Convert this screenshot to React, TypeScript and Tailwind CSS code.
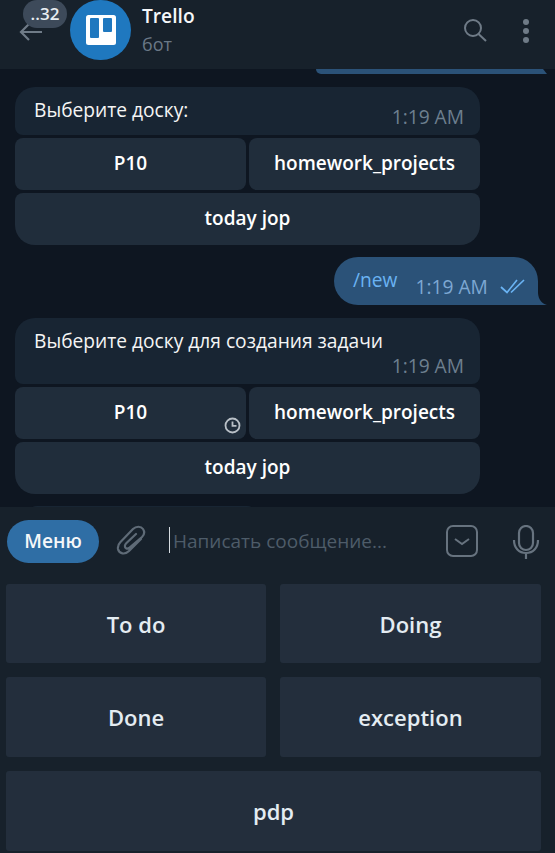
import React from 'react';

const font = { fontFamily: '"Open Sans", "Noto Sans", sans-serif' };

const Tail = ({ className }: { className: string }) => (
  <svg className={className} width="9" height="12" viewBox="0 0 9 12">
    <path d="M0 0 C0.5 6 3 10 9 12 L0 12 Z" fill="#2b5278" />
  </svg>
);

const InlineBtn = ({ label, className, children }: { label: string; className: string; children?: React.ReactNode }) => (
  <div className={`relative flex h-[52px] items-center justify-center bg-[#202d3b] pb-[1px] text-[19px] font-semibold text-white ${className}`}>
    {label}
    {children}
  </div>
);

const Board = ({ text, tall, pending }: { text: string; tall?: boolean; pending?: boolean }) => (
  <div className="ml-[15px] flex w-[465px] flex-col gap-[3px]">
    <div className={`relative rounded-t-[20px] rounded-b-[8px] bg-[#182533] pl-[19px] pt-[10px] text-[19.2px] leading-[26px] text-[#f5f5f5] ${tall ? 'h-[66px]' : 'h-[48px]'}`}>
      {text}
      <span className="absolute bottom-[6px] right-[16px] text-[19.2px] leading-[24px] text-[#6d7f8f]">1:19 AM</span>
    </div>
    <div className="flex gap-[3px]">
      <InlineBtn label="P10" className="w-[231px] rounded-[8px]">
        {pending && (
          <svg className="absolute bottom-[5px] right-[5px]" width="17" height="17" viewBox="0 0 17 17" fill="none" stroke="#b9c0c7" strokeWidth="1.8">
            <circle cx="8.5" cy="8.5" r="7" />
            <path d="M8.5 4.5 V8.8 H12.5" />
          </svg>
        )}
      </InlineBtn>
      <InlineBtn label="homework_projects" className="w-[231px] rounded-[8px]" />
    </div>
    <InlineBtn label="today jop" className="rounded-t-[8px] rounded-b-[20px]" />
  </div>
);

const KeyBtn = ({ label, className }: { label: string; className: string }) => (
  <div className={`flex items-center justify-center rounded-[3px] bg-[#232e3c] pt-[1px] text-[22px] font-semibold text-[#e4ecf2] ${className}`}>
    {label}
  </div>
);

export default function App() {
  return (
    <div className="flex h-[853px] w-[555px] flex-col overflow-hidden bg-[#0e1621]" style={font}>
      {/* header */}
      <div className="relative flex h-[69px] shrink-0 items-start bg-[#17212b]">
        <svg className="absolute left-[18px] top-[19px]" width="26" height="26" viewBox="0 0 26 26" fill="none" stroke="#6f7b87" strokeWidth="2.2">
          <path d="M24 13 H3 M11 5 L3 13 L11 21" />
        </svg>
        <div className="absolute left-[23px] top-0 flex h-[28px] w-[44px] items-center justify-center rounded-[14px] bg-[#3d4a5a] text-[17px] font-semibold text-[#e8edf1]">
          ..32
        </div>
        <div className="absolute left-[70px] top-0 flex h-[60px] w-[61px] items-center justify-center rounded-full bg-[#1f78bf]">
          <svg width="32" height="32" viewBox="0 0 32 32">
            <rect x="1" y="1" width="30" height="30" rx="2.5" fill="#fff" />
            <rect x="5" y="4" width="9" height="20" rx="1" fill="#1f78bf" />
            <rect x="18" y="4" width="9" height="14" rx="1" fill="#1f78bf" />
          </svg>
        </div>
        <div className="ml-[142px] flex flex-col">
          <span className="mt-[2px] text-[19.2px] font-semibold leading-[28px] text-[#f5f7f9]">Trello</span>
          <span className="mt-[1px] text-[18px] leading-[26px] text-[#6a7886]">бот</span>
        </div>
        <div className="ml-auto mr-[26px] mt-[18px] flex items-start gap-[36px]">
          <svg width="24" height="25" viewBox="0 0 24 25" fill="none" stroke="#6f7b87" strokeWidth="2">
            <circle cx="10" cy="10" r="8" />
            <path d="M15.5 16 L23 23" />
          </svg>
          <div className="mt-[1px] flex flex-col gap-[3px]">
            <span className="h-[6px] w-[6px] rounded-full bg-[#6f7b87]" />
            <span className="h-[6px] w-[6px] rounded-full bg-[#6f7b87]" />
            <span className="h-[6px] w-[6px] rounded-full bg-[#6f7b87]" />
          </div>
        </div>
      </div>

      {/* chat */}
      <div className="relative h-[438px] shrink-0 overflow-hidden">
        <div className="relative ml-[316px] h-[5px] w-[227px] rounded-bl-[14px] bg-[#2b5278]">
          <svg className="absolute -right-[4px] bottom-0" width="4" height="5" viewBox="0 0 4 5">
            <path d="M0 0 L4 5 L0 5 Z" fill="#2b5278" />
          </svg>
        </div>
        <div className="mt-[13px]">
          <Board text="Выберите доску:" />
        </div>
        <div className="relative ml-[334px] mt-[12px] flex h-[48px] w-[204px] items-start rounded-[24px] rounded-br-none bg-[#2b5278] pl-[19px] pt-[10px] text-[19.2px] leading-[26px] text-[#6ab3f3]">
          /new
          <span className="ml-[18px] mt-[8px] text-[19.2px] leading-[24px] text-[#7da8d3]">1:19 AM</span>
          <svg className="absolute left-[166px] top-[21px]" width="26" height="16" viewBox="0 0 26 16" fill="none" stroke="#6ab3f3" strokeWidth="1.7">
            <path d="M1 9 L7 14.5 L17 2 M11 14.5 L24 2" />
          </svg>
          <Tail className="absolute -right-[9px] bottom-0" />
        </div>
        <div className="mt-[13px]">
          <Board text="Выберите доску для создания задачи" tall pending />
        </div>
        <div className="ml-[27px] mt-[12px] h-[10px] w-[230px] rounded-t-[10px] bg-[#182533]" />
      </div>

      {/* input */}
      <div className="relative flex h-[62px] shrink-0 items-center bg-[#17212b] pt-[7px]">
        <div className="ml-[7px] flex h-[43px] w-[92px] items-center justify-center rounded-[22px] bg-[#2f6ea5] text-[19.2px] font-semibold text-[#f5f7f9]">
          Меню
        </div>
        <svg className="ml-[17px] -mt-[3px]" width="30" height="32" viewBox="0 0 30 32" fill="none" stroke="#5f6b77" strokeWidth="2.2" strokeLinecap="round">
          <path d="M25 15 L13 27 C9 31 3 30 2 25 C1.5 22 2.5 20 4.5 18 L17 5 C20 2 25 2 27 5 C29 8 28 11 26 13 L13 24 C11 25.5 8.5 24 9 21.5 C9 20.5 10 19.5 10.5 19 L20 10" />
        </svg>
        <span className="ml-[23px] -mt-[3px] h-[26px] w-px bg-[#d5dbe0]" />
        <span className="ml-[3px] -mt-[1px] text-[19px] text-[#4e5c69]">Написать сообщение...</span>
        <svg className="absolute left-[446px] top-[18px]" width="32" height="32" viewBox="0 0 32 32" fill="none" stroke="#67737f" strokeWidth="2">
          <rect x="1" y="1" width="30" height="30" rx="6" />
          <path d="M9 14 L16 19 L23 14" />
        </svg>
        <svg className="absolute left-[512px] top-[18px]" width="28" height="34" viewBox="0 0 28 34" fill="none" stroke="#67737f" strokeWidth="2.2">
          <rect x="7" y="1" width="14" height="24" rx="7" />
          <path d="M2 15 C2 23 7 28 14 28 C21 28 26 23 26 15 M14 28 V34" />
        </svg>
      </div>

      {/* bot keyboard */}
      <div className="grid flex-1 grid-cols-[260px_261px] grid-rows-[79px_80px_80px] content-start gap-x-[14px] gap-y-[14px] bg-[#17212b] pl-[6px] pt-[15px]">
        <KeyBtn label="To do" className="" />
        <KeyBtn label="Doing" className="" />
        <KeyBtn label="Done" className="" />
        <KeyBtn label="exception" className="" />
        <KeyBtn label="pdp" className="col-span-2" />
      </div>
    </div>
  );
}
